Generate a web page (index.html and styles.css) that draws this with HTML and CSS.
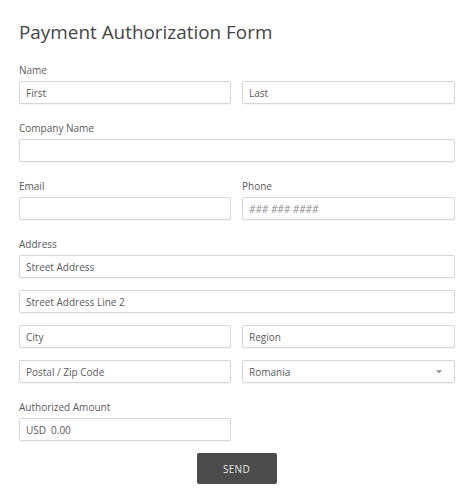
FILE: index.html
```html
<!DOCTYPE html>
<html>
<head>
<meta charset="utf-8">
<link rel="stylesheet" href="styles.css">
</head>
<body>
<form class="form">
  <h1 class="title">Payment Authorization Form</h1>

  <div class="group">
    <label class="label">Name</label>
    <div class="row">
      <input class="field" placeholder="First">
      <input class="field" placeholder="Last">
    </div>
  </div>

  <div class="group">
    <label class="label">Company Name</label>
    <input class="field">
  </div>

  <div class="row group">
    <div class="col">
      <label class="label">Email</label>
      <input class="field">
    </div>
    <div class="col">
      <label class="label">Phone</label>
      <input class="field phone" placeholder="### ### ####">
    </div>
  </div>

  <div class="group">
    <label class="label">Address</label>
    <div class="stack">
      <input class="field" placeholder="Street Address">
      <input class="field" placeholder="Street Address Line 2">
      <div class="row">
        <input class="field" placeholder="City">
        <input class="field" placeholder="Region">
      </div>
      <div class="row">
        <input class="field" placeholder="Postal / Zip Code">
        <div class="select-wrap">
          <select class="field select"><option>Romania</option></select>
          <svg class="arrow" width="6" height="4" viewBox="0 0 6 4"><path d="M0 0 L6 0 L3 3.5 Z" fill="#9a9a9a"/></svg>
        </div>
      </div>
    </div>
  </div>

  <div class="group last">
    <label class="label">Authorized Amount</label>
    <div class="row">
      <div class="field amount"><span class="cur">USD</span><input class="amount-input" value="0.00"></div>
      <div></div>
    </div>
  </div>

  <div class="actions">
    <button type="button" class="send">SEND</button>
  </div>
</form>
</body>
</html>
```

FILE: styles.css
```css
* { box-sizing: border-box; }
html, body { margin: 0; padding: 0; background: #fff; }
body { font-family: "Open Sans", "Liberation Sans", sans-serif; color: #5a5a5a; }
.form { padding: 18px 19px 0 19px; width: 474px; }
.title {
  margin: 0 0 17px 0;
  font-size: 18.9px;
  line-height: 28px;
  font-weight: 400;
  color: #454545;
}
.group { margin-bottom: 17px; }
.group.last { margin-bottom: 12px; }
.label {
  display: block;
  font-size: 10px;
  line-height: 14px;
  margin-bottom: 4px;
  color: #5a5a5a;
}
.row { display: grid; grid-template-columns: 212px 213px; column-gap: 11px; }
.col { display: flex; flex-direction: column; }
.stack { display: flex; flex-direction: column; gap: 12px; }
.field {
  display: block;
  width: 100%;
  height: 23px;
  margin: 0;
  border: 1px solid #d6d6d6;
  border-radius: 2px;
  background: #fff;
  padding: 0 6px;
  font-family: "Open Sans", "Liberation Sans", sans-serif;
  font-size: 10px;
  color: #5a5a5a;
  outline: none;
  box-shadow: 0 1px 1px rgba(0,0,0,0.04);
}
.field::placeholder { color: #5a5a5a; opacity: 1; }
.phone::placeholder { color: #8a8a8a; font-style: italic; }
.select-wrap { position: relative; }
.select { appearance: none; -webkit-appearance: none; }
.arrow { position: absolute; right: 13px; top: 10px; }
.amount { display: flex; align-items: center; }
.cur { font-size: 10px; color: #5a5a5a; margin-right: 5px; }
.amount-input {
  border: none; outline: none; padding: 0; margin: 0;
  font-family: "Open Sans", "Liberation Sans", sans-serif;
  font-size: 10px; color: #5a5a5a; width: 100px; background: transparent;
}
.actions { display: flex; justify-content: center; }
.send {
  width: 80px;
  height: 31px;
  background: #4b4b4b;
  border: none;
  border-radius: 2px;
  color: #e6e6e6;
  font-family: "Open Sans", "Liberation Sans", sans-serif;
  font-size: 10px;
  letter-spacing: 0.3px;
  margin-left: -1px;
}
```
